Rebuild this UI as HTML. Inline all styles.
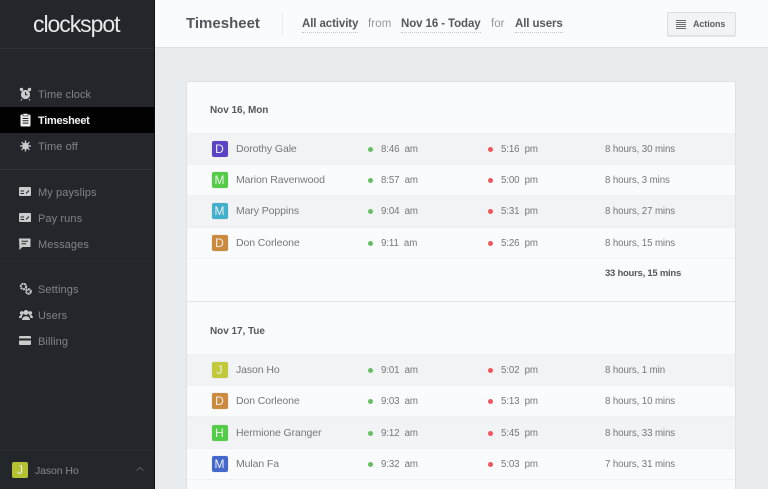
<!DOCTYPE html>
<html><head><meta charset="utf-8"><style>
*{box-sizing:border-box;margin:0;padding:0}
html,body{width:768px;height:489px;overflow:hidden;background:#e9ecee;font-family:"Liberation Sans",sans-serif}
#wrap{position:relative;width:768px;height:489px;overflow:hidden;background:#e9ecee}
.a{position:absolute;white-space:nowrap}
#side{position:absolute;left:0;top:0;width:155px;height:489px;background:#23272b;border-right:1px solid #111}
.n{position:absolute;left:38px;font-size:11px;color:#80858a;line-height:16px;letter-spacing:.1px}
.ic{position:absolute;left:19px;width:14px;height:14px}
.l{position:absolute;left:0;width:154px;height:1px;background:#2c3035}
.row{position:absolute;left:187px;width:548px;height:32px;border-top:1px solid #f0f1f3;border-bottom:1px solid #f0f1f3}
.g{background:#f2f3f5}
.w{background:#fafbfd}
.av{position:absolute;left:24.5px;top:6.5px;width:16px;height:16px;border-radius:2px;color:#f0f0f0;font-size:12px;line-height:16px;text-align:center;box-shadow:0 0 0 .5px #e4e6e8}
.t{position:absolute;top:0;line-height:31px;font-size:9.7px;color:#74777a;letter-spacing:-.1px;white-space:nowrap}
.nm{left:49px;font-size:10.5px;letter-spacing:-.1px;line-height:30px}
.d{position:absolute;top:13px;width:5px;height:5px;border-radius:50%}
.dg{left:181px;background:#68bd62}.dr{left:301px;background:#f2545f}
.h{font-size:11.5px;font-weight:bold;color:#55585c;border-bottom:1px dotted #c2c5c8;line-height:18px;height:18px;letter-spacing:-.1px}
</style></head><body><div id="wrap">
<div id="side">
<div class="a" style="left:33px;top:9px;font-size:23px;line-height:30px;color:#e8e9ea;letter-spacing:-1.05px">clockspot</div>
<div class="l" style="top:48px"></div>
<svg class="ic" style="top:87px" viewBox="0 0 14 14"><circle cx="6.500" cy="7.500" r="4.600" fill="#c9cbcd"/><path d="M6.500 5v2.800h2" stroke="#23272b" fill="none"/><circle cx="2.500" cy="2.500" r="1.700" fill="#c9cbcd"/><circle cx="10.500" cy="2.500" r="1.700" fill="#c9cbcd"/><path d="M3 12l-1 1.500M10 12l1 1.500" stroke="#c9cbcd"/></svg>
<div class="n" style="top:87px">Time clock</div>
<div class="a" style="left:0;top:107px;width:154px;height:26px;background:#020202"></div>
<svg class="ic" style="top:113px" viewBox="0 0 14 14"><rect x="1.500" y="1.500" width="10" height="12" rx="1" fill="#f0f0f0"/><rect x="4" y="0.500" width="5" height="2.500" fill="#f0f0f0" stroke="#020202" stroke-width=".5"/><path d="M3.500 5.500h6M3.500 7.800h6M3.500 10.100h6" stroke="#222"/></svg>
<div class="n" style="top:113px;color:#f4f5f6;font-weight:bold;letter-spacing:-.3px">Timesheet</div>
<svg class="ic" style="top:139px" viewBox="0 0 14 14"><circle cx="6.500" cy="7" r="3.300" fill="#c9cbcd"/><path d="M6.500 1.500v11M1 7h11M2.600 3.100l7.800 7.800M10.400 3.100l-7.800 7.800" stroke="#c9cbcd" stroke-width="1.300"/></svg>
<div class="n" style="top:139px">Time off</div>
<div class="l" style="top:169px"></div>
<svg class="ic" style="top:185px" viewBox="0 0 14 14"><rect x="0" y="2" width="12" height="9" rx="1" fill="#c9cbcd"/><path d="M1.500 6h3.500M1.500 8.500h3.500M7 8.500l3-3" stroke="#23272b"/></svg>
<div class="n" style="top:185px">My payslips</div>
<svg class="ic" style="top:211px" viewBox="0 0 14 14"><rect x="0" y="2" width="12" height="9" rx="1" fill="#c9cbcd"/><path d="M1.500 6h3.500M1.500 8.500h3.500M7 8.500l3-3" stroke="#23272b"/></svg>
<div class="n" style="top:211px">Pay runs</div>
<svg class="ic" style="top:237px" viewBox="0 0 14 14"><path d="M0 1.500h11.500v8.500H3.500L0.500 13z" fill="#c9cbcd"/><path d="M2.500 4.300h6.500M2.500 6.800h4.500" stroke="#23272b"/></svg>
<div class="n" style="top:237px">Messages</div>
<div class="l" style="top:260px;background:#272b2f"></div>
<svg class="ic" style="top:282px" viewBox="0 0 14 14"><circle cx="4.500" cy="4.500" r="2.700" fill="none" stroke="#c9cbcd" stroke-width="2" stroke-dasharray="2 .6"/><circle cx="9.500" cy="9.500" r="2.300" fill="none" stroke="#c9cbcd" stroke-width="2" stroke-dasharray="2 .5"/></svg>
<div class="n" style="top:282px">Settings</div>
<svg class="ic" style="top:308px" viewBox="0 0 14 14"><circle cx="7" cy="4.500" r="2.500" fill="#c9cbcd"/><circle cx="2.800" cy="5" r="1.900" fill="#c9cbcd"/><circle cx="11.200" cy="5" r="1.900" fill="#c9cbcd"/><path d="M3 12c0-5 8-5 8 0zM0 10c0-3 3-3.500 3.500-3l-1 3zM14 10c0-3-3-3.500-3.500-3l1 3z" fill="#c9cbcd"/></svg>
<div class="n" style="top:308px">Users</div>
<svg class="ic" style="top:334px" viewBox="0 0 14 14"><rect x="0" y="2" width="12" height="9" rx="1" fill="#c9cbcd"/><rect x="0" y="4.500" width="12" height="2" fill="#23272b"/></svg>
<div class="n" style="top:334px">Billing</div>
<div class="l" style="top:450px"></div>
<div class="a" style="left:12px;top:462px;width:16px;height:16px;border-radius:2px;background:#b3c132;color:#eee;font-size:12px;line-height:16px;text-align:center">J</div>
<div class="a" style="left:35px;top:463px;font-size:10.500px;line-height:16px;color:#85898d;letter-spacing:-.1px">Jason Ho</div>
<svg class="a" style="left:136px;top:466px" width="8" height="6" viewBox="0 0 8 6"><path d="M.5 4.500L4 1.500l3.500 3" fill="none" stroke="#50555a" stroke-width="1.200"/></svg>
</div>

<div class="a" style="left:155px;top:0;width:613px;height:48px;background:#fafbfd;border-bottom:1px solid #dfe1e3"></div>
<div class="a" style="left:186px;top:14px;font-size:15px;font-weight:bold;color:#53565a;line-height:19px;letter-spacing:0">Timesheet</div>
<div class="a" style="left:282px;top:12px;width:1px;height:24px;background:#eaecee"></div>
<div class="a h" style="left:302px;top:15px">All activity</div>
<div class="a" style="left:368px;top:16px;font-size:11.500px;color:#96999c;line-height:17px;letter-spacing:.1px">from</div>
<div class="a h" style="left:401px;top:15px">Nov 16 - Today</div>
<div class="a" style="left:491px;top:16px;font-size:11.500px;color:#96999c;line-height:17px">for</div>
<div class="a h" style="left:515px;top:15px">All users</div>
<div class="a" style="left:667px;top:12px;width:69px;height:24px;background:#f2f3f5;border:1px solid #dcdee0;border-radius:2px;box-shadow:0 1px 0 #e4e6e8"></div>
<div class="a" style="left:676px;top:20px;width:10px;height:9px;background:repeating-linear-gradient(#6a6d70 0 1px,#f2f3f5 1px 2px)"></div>
<div class="a" style="left:693px;top:17px;font-size:9px;font-weight:bold;color:#5c5f63;line-height:15px;letter-spacing:-.1px">Actions</div>

<div class="a" style="left:186px;top:81px;width:550px;height:420px;background:#fafbfd;border:1px solid #dfe1e3;border-radius:2px"></div>

<div class="a" style="left:210px;top:103px;font-size:10px;font-weight:bold;color:#55585c;line-height:16px;letter-spacing:-.05px">Nov 16, Mon</div>

<div class="row g" style="top:133px"><div class="av" style="background:#5c43c4">D</div><span class="t nm">Dorothy Gale</span><i class="d dg"></i><span class="t" style="left:194px">8:46&nbsp; am</span><i class="d dr"></i><span class="t" style="left:314px">5:16&nbsp; pm</span><span class="t" style="left:418px">8 hours, 30 mins</span></div>
<div class="row w" style="top:164px"><div class="av" style="background:#55cc47">M</div><span class="t nm">Marion Ravenwood</span><i class="d dg"></i><span class="t" style="left:194px">8:57&nbsp; am</span><i class="d dr"></i><span class="t" style="left:314px">5:00&nbsp; pm</span><span class="t" style="left:418px">8 hours, 3 mins</span></div>
<div class="row g" style="top:195px"><div class="av" style="background:#42b0cc">M</div><span class="t nm">Mary Poppins</span><i class="d dg"></i><span class="t" style="left:194px">9:04&nbsp; am</span><i class="d dr"></i><span class="t" style="left:314px">5:31&nbsp; pm</span><span class="t" style="left:418px">8 hours, 27 mins</span></div>
<div class="row w" style="top:227px"><div class="av" style="background:#cc8a3e">D</div><span class="t nm">Don Corleone</span><i class="d dg"></i><span class="t" style="left:194px">9:11&nbsp; am</span><i class="d dr"></i><span class="t" style="left:314px">5:26&nbsp; pm</span><span class="t" style="left:418px">8 hours, 15 mins</span></div>
<div class="a" style="left:605px;top:266px;font-size:9.500px;font-weight:bold;color:#55585c;line-height:16px;letter-spacing:-.25px">33 hours, 15 mins</div>
<div class="a" style="left:187px;top:301px;width:548px;height:1px;background:#e2e4e6"></div>

<div class="a" style="left:210px;top:324px;font-size:10px;font-weight:bold;color:#55585c;line-height:16px;letter-spacing:-.05px">Nov 17, Tue</div>

<div class="row g" style="top:354px"><div class="av" style="background:#bfc93a">J</div><span class="t nm">Jason Ho</span><i class="d dg"></i><span class="t" style="left:194px">9:01&nbsp; am</span><i class="d dr"></i><span class="t" style="left:314px">5:02&nbsp; pm</span><span class="t" style="left:418px">8 hours, 1 min</span></div>
<div class="row w" style="top:385px"><div class="av" style="background:#cc8a3e">D</div><span class="t nm">Don Corleone</span><i class="d dg"></i><span class="t" style="left:194px">9:03&nbsp; am</span><i class="d dr"></i><span class="t" style="left:314px">5:13&nbsp; pm</span><span class="t" style="left:418px">8 hours, 10 mins</span></div>
<div class="row g" style="top:417px"><div class="av" style="background:#55cc47">H</div><span class="t nm">Hermione Granger</span><i class="d dg"></i><span class="t" style="left:194px">9:12&nbsp; am</span><i class="d dr"></i><span class="t" style="left:314px">5:45&nbsp; pm</span><span class="t" style="left:418px">8 hours, 33 mins</span></div>
<div class="row w" style="top:448px"><div class="av" style="background:#4468cc">M</div><span class="t nm">Mulan Fa</span><i class="d dg"></i><span class="t" style="left:194px">9:32&nbsp; am</span><i class="d dr"></i><span class="t" style="left:314px">5:03&nbsp; pm</span><span class="t" style="left:418px">7 hours, 31 mins</span></div>
</div></body></html>
